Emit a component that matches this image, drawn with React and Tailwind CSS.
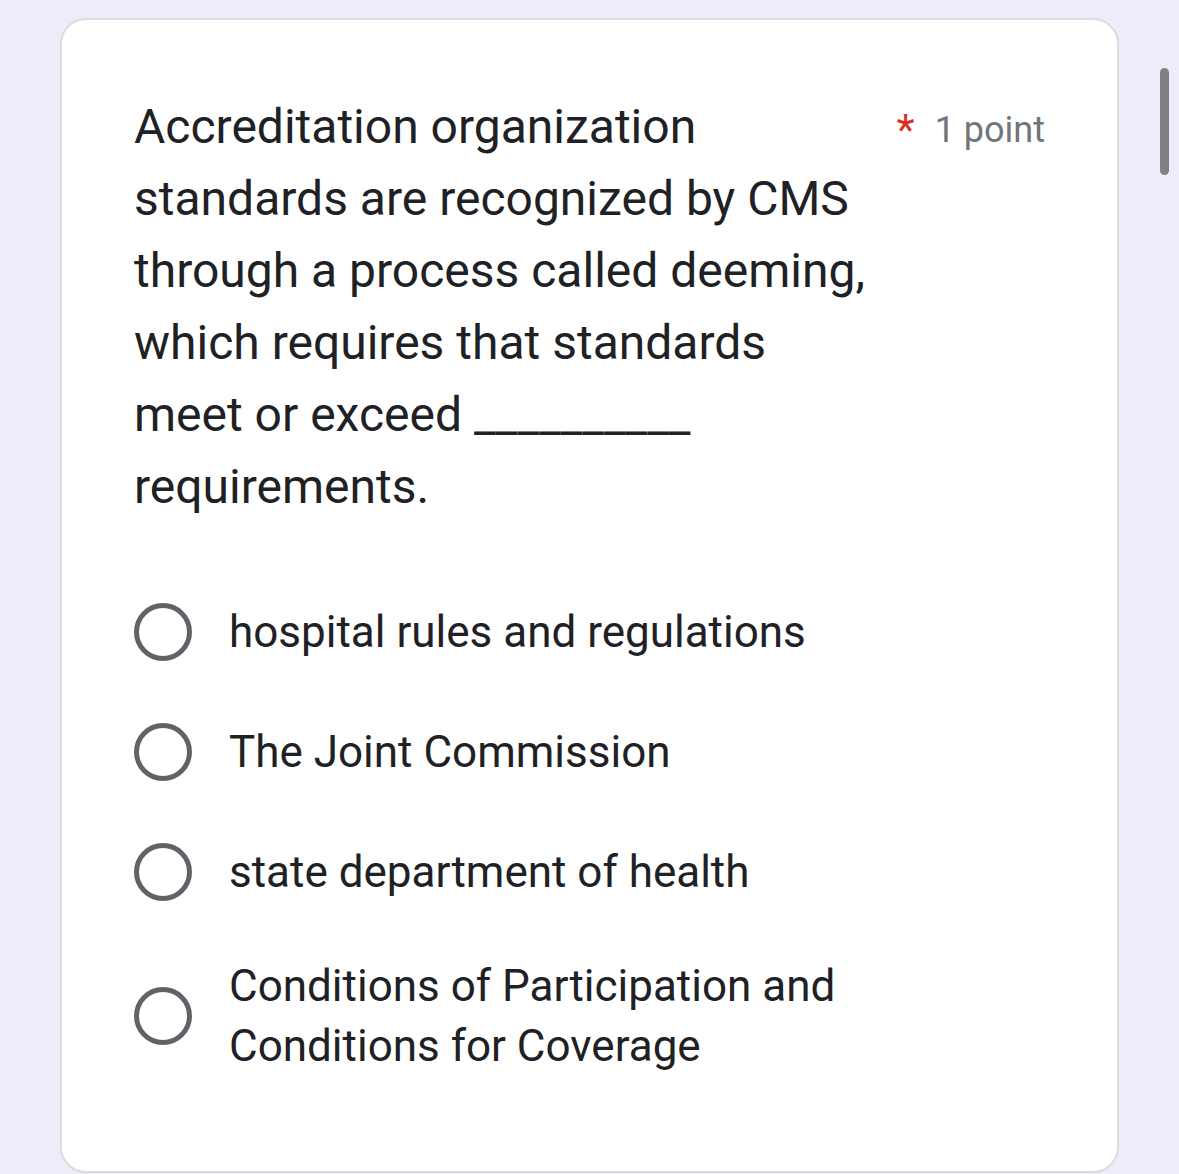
import React from 'react';

const options = [
  ['hospital rules and regulations'],
  ['The Joint Commission'],
  ['state department of health'],
  ['Conditions of Participation and', 'Conditions for Coverage'],
];

const Radio = () => (
  <span className="block h-[58px] w-[58px] shrink-0 rounded-full border-[5px] border-[#5f6368]" />
);

export default function App() {
  return (
    <div className="flex h-[1174px] w-[1179px] overflow-hidden bg-[#efebf8] font-['Roboto',sans-serif]">
      <div className="mt-[18px] ml-[60px] h-[1155px] w-[1059px] shrink-0 rounded-[26px] border-2 border-[#dcdbe0] bg-white pl-[72px] pr-[72px] pt-[71px]">
        <div className="flex items-start justify-between">
          <p className="w-[745px] text-[48px] leading-[72px] text-[#202124]">
            Accreditation organization standards are recognized by CMS through a process called deeming, which requires that standards meet or exceed __________ requirements.
          </p>
          <div className="flex items-start pt-[17px] text-[36px] text-[#70757a]">
            <span className="mr-[20px] text-[42px] leading-[44px] text-[#d93025]">*</span>
            <span className="leading-[44px]">1 point</span>
          </div>
        </div>
        <div className="mt-[79px] flex flex-col">
          {options.map((lines, i) => (
            <div
              key={i}
              className={`flex items-center gap-[37px] ${i === 0 ? '' : i === 3 ? 'mt-[54px]' : 'mt-[60px]'}`}
            >
              <Radio />
              <div className="text-[44px] leading-[60px] text-[#202124]">
                {lines.map((l) => (
                  <div key={l}>{l}</div>
                ))}
              </div>
            </div>
          ))}
        </div>
      </div>
      <div className="ml-[41px] mt-[68px] h-[107px] w-[9px] shrink-0 rounded-full bg-[#808085]" />
    </div>
  );
}
